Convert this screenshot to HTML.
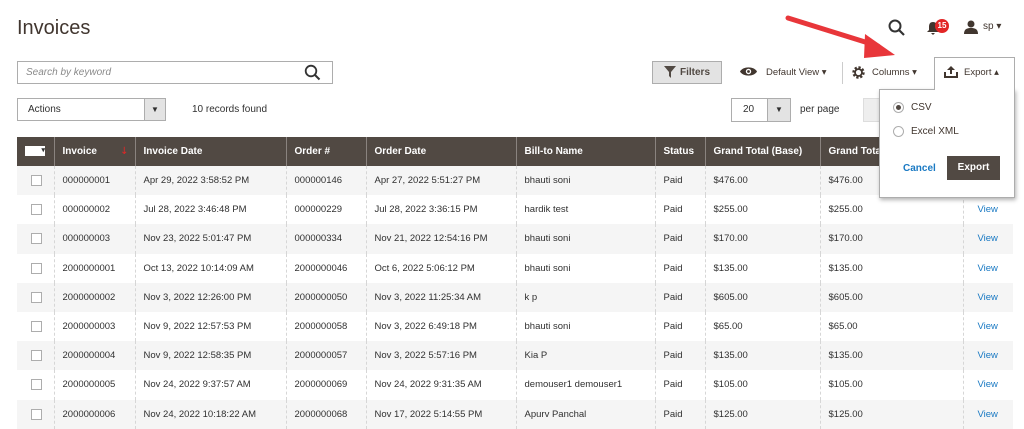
<!DOCTYPE html>
<html><head><meta charset="utf-8"><style>
*{box-sizing:border-box;margin:0;padding:0}
body{width:1024px;height:422px;overflow:hidden;background:#fff;font-family:"Liberation Sans",sans-serif;color:#303030;position:relative;font-size:10px}
.a{position:absolute}
table{position:absolute;left:17px;top:137px;width:996px;border-collapse:collapse;table-layout:fixed}
th{background:#514943;color:#fff;font-weight:bold;text-align:left;height:29px;padding-left:8px;font-size:10px;border-left:1px solid #8a837f}
td{height:29.2px;padding-left:8px;font-size:9.5px;color:#303030;border-left:1px dashed #d6d6d6}
tr:nth-child(even) td{background:#f5f5f5}
td:first-child,th:first-child{border-left:none}
.cb{width:11px;height:11px;border:1px solid #adadad;background:#fff;margin-left:6px}
.v{color:#1979c3;padding-left:14px}
</style></head><body>
<div class="a" style="left:17px;top:17px;font-size:20px;color:#41362f">Invoices</div>
<svg class="a" style="left:888px;top:19px" width="18" height="18" viewBox="0 0 18 18"><circle cx="7" cy="7" r="5.5" fill="none" stroke="#333" stroke-width="2"/><line x1="11" y1="11" x2="16" y2="16" stroke="#333" stroke-width="2.2"/></svg>
<svg class="a" style="left:926px;top:21px" width="14" height="14" viewBox="0 0 14 14"><path d="M7 1c3 0 4 2 4 5v3l2 2H1l2-2V6c0-3 1-5 4-5z M5 12h4l-2 2z" fill="#41362f"/></svg>
<div class="a" style="left:935px;top:19px;width:14px;height:14px;border-radius:7px;background:#e22626;color:#fff;font-size:8px;font-weight:bold;text-align:center;line-height:14px">15</div>
<svg class="a" style="left:964px;top:20px" width="14" height="14" viewBox="0 0 14 14"><circle cx="7" cy="4" r="3.5" fill="#41362f"/><path d="M0 14c0-5 3-6 7-6s7 1 7 6z" fill="#41362f"/></svg>
<div class="a" style="left:983px;top:21px;font-size:10px;color:#41362f">sp ▾</div>
<svg class="a" style="left:780px;top:10px" width="130" height="50" viewBox="0 0 130 50"><line x1="8" y1="8" x2="98" y2="36" stroke="#e8363a" stroke-width="5" stroke-linecap="round"/><polygon points="85,24 115,45 84,48" fill="#e8363a"/></svg>
<div class="a" style="left:17px;top:61px;width:316px;height:23px;border:1px solid #adadad"></div>
<div class="a" style="left:26px;top:67px;font-size:10px;font-style:italic;color:#8a8a8a">Search by keyword</div>
<svg class="a" style="left:304px;top:64px" width="17" height="17" viewBox="0 0 17 17"><circle cx="7" cy="7" r="5.3" fill="none" stroke="#333" stroke-width="1.8"/><line x1="11" y1="11" x2="15.5" y2="15.5" stroke="#333" stroke-width="2"/></svg>
<div class="a" style="left:17px;top:98px;width:149px;height:23px;border:1px solid #adadad"></div>
<div class="a" style="left:144px;top:99px;width:21px;height:21px;background:#e3e3e3;border-left:1px solid #adadad;text-align:center;font-size:8px;line-height:21px">▼</div>
<div class="a" style="left:28px;top:104px;font-size:10px">Actions</div>
<div class="a" style="left:192px;top:104px;font-size:10px">10 records found</div>
<div class="a" style="left:652px;top:61px;width:70px;height:23px;background:#e3e3e3;border:1px solid #adadad;font-size:10px;font-weight:bold;color:#514943;padding:5px 0 0 27px">Filters</div>
<svg class="a" style="left:664px;top:66px" width="12" height="12" viewBox="0 0 12 12"><path d="M0 0h12L7 6v6L5 10V6z" fill="#514943"/></svg>
<svg class="a" style="left:740px;top:66px" width="17" height="11" viewBox="0 0 17 11"><path d="M0 5.5C3 0 14 0 17 5.5 14 11 3 11 0 5.5z" fill="#41362f"/><circle cx="8.5" cy="5.5" r="2.7" fill="#fff"/><circle cx="8.5" cy="5.5" r="1.4" fill="#41362f"/></svg>
<div class="a" style="left:766px;top:67px;font-size:9.5px;color:#41362f">Default View ▾</div>
<div class="a" style="left:842px;top:62px;width:1px;height:22px;background:#ccc"></div>
<svg class="a" style="left:852px;top:66px" width="13" height="13" viewBox="0 0 13 13"><circle cx="6.5" cy="6.5" r="4.5" fill="none" stroke="#41362f" stroke-width="3.4" stroke-dasharray="2 1.5"/><circle cx="6.5" cy="6.5" r="3.5" fill="none" stroke="#41362f" stroke-width="1.8"/></svg>
<div class="a" style="left:872px;top:67px;font-size:9.5px;color:#41362f">Columns ▾</div>
<div class="a" style="left:934px;top:57px;width:81px;height:33px;border:1px solid #adadad;border-bottom:none;background:#fff;z-index:3"></div>
<svg class="a" style="left:944px;top:66px;z-index:4" width="14" height="12" viewBox="0 0 14 12"><path d="M7 0L3 4h3v4h2V4h3z M0 6h2v4h10V6h2v6H0z" fill="#41362f"/></svg>
<div class="a" style="left:964px;top:67px;font-size:9.5px;color:#41362f;z-index:4">Export ▴</div>
<div class="a" style="left:731px;top:98px;width:60px;height:24px;border:1px solid #adadad"></div>
<div class="a" style="left:767px;top:99px;width:23px;height:22px;background:#e3e3e3;border-left:1px solid #adadad;text-align:center;font-size:8px;line-height:22px">▼</div>
<div class="a" style="left:743px;top:104px;font-size:10px">20</div>
<div class="a" style="left:800px;top:104px;font-size:10px">per page</div>
<div class="a" style="left:863px;top:98px;width:20px;height:24px;background:#eee;border:1px solid #ddd"></div>
<table>
<colgroup><col style="width:37px"><col style="width:81px"><col style="width:151px"><col style="width:80px"><col style="width:150px"><col style="width:139px"><col style="width:50px"><col style="width:115px"><col style="width:143px"><col style="width:50px"></colgroup>
<tr><th style="padding-left:8px"><span style="display:inline-block;width:20px;height:10px;background:#fff;vertical-align:middle;font-size:7px;color:#333;text-align:right;line-height:10px">▾</span></th><th>Invoice <span style="float:right;margin-right:6px;color:#e22626;font-family:'DejaVu Sans',sans-serif;font-weight:normal">↓</span></th><th>Invoice Date</th><th>Order #</th><th>Order Date</th><th>Bill-to Name</th><th>Status</th><th>Grand Total (Base)</th><th>Grand Total (Purchased)</th><th>Action</th></tr>
<tr><td><div class="cb"></div></td><td>000000001</td><td>Apr 29, 2022 3:58:52 PM</td><td>000000146</td><td>Apr 27, 2022 5:51:27 PM</td><td>bhauti soni</td><td>Paid</td><td>$476.00</td><td>$476.00</td><td class="v">View</td></tr>
<tr><td><div class="cb"></div></td><td>000000002</td><td>Jul 28, 2022 3:46:48 PM</td><td>000000229</td><td>Jul 28, 2022 3:36:15 PM</td><td>hardik test</td><td>Paid</td><td>$255.00</td><td>$255.00</td><td class="v">View</td></tr>
<tr><td><div class="cb"></div></td><td>000000003</td><td>Nov 23, 2022 5:01:47 PM</td><td>000000334</td><td>Nov 21, 2022 12:54:16 PM</td><td>bhauti soni</td><td>Paid</td><td>$170.00</td><td>$170.00</td><td class="v">View</td></tr>
<tr><td><div class="cb"></div></td><td>2000000001</td><td>Oct 13, 2022 10:14:09 AM</td><td>2000000046</td><td>Oct 6, 2022 5:06:12 PM</td><td>bhauti soni</td><td>Paid</td><td>$135.00</td><td>$135.00</td><td class="v">View</td></tr>
<tr><td><div class="cb"></div></td><td>2000000002</td><td>Nov 3, 2022 12:26:00 PM</td><td>2000000050</td><td>Nov 3, 2022 11:25:34 AM</td><td>k p</td><td>Paid</td><td>$605.00</td><td>$605.00</td><td class="v">View</td></tr>
<tr><td><div class="cb"></div></td><td>2000000003</td><td>Nov 9, 2022 12:57:53 PM</td><td>2000000058</td><td>Nov 3, 2022 6:49:18 PM</td><td>bhauti soni</td><td>Paid</td><td>$65.00</td><td>$65.00</td><td class="v">View</td></tr>
<tr><td><div class="cb"></div></td><td>2000000004</td><td>Nov 9, 2022 12:58:35 PM</td><td>2000000057</td><td>Nov 3, 2022 5:57:16 PM</td><td>Kia P</td><td>Paid</td><td>$135.00</td><td>$135.00</td><td class="v">View</td></tr>
<tr><td><div class="cb"></div></td><td>2000000005</td><td>Nov 24, 2022 9:37:57 AM</td><td>2000000069</td><td>Nov 24, 2022 9:31:35 AM</td><td>demouser1 demouser1</td><td>Paid</td><td>$105.00</td><td>$105.00</td><td class="v">View</td></tr>
<tr><td><div class="cb"></div></td><td>2000000006</td><td>Nov 24, 2022 10:18:22 AM</td><td>2000000068</td><td>Nov 17, 2022 5:14:55 PM</td><td>Apurv Panchal</td><td>Paid</td><td>$125.00</td><td>$125.00</td><td class="v">View</td></tr>
</table>
<div class="a" style="left:879px;top:89px;width:136px;height:109px;background:#fff;border:1px solid #adadad;box-shadow:1px 2px 4px rgba(0,0,0,.3);z-index:2"></div>
<div class="a" style="left:935px;top:88px;width:79px;height:3px;background:#fff;z-index:3"></div>
<div class="a" style="left:893px;top:102px;width:11px;height:11px;border:1px solid #adadad;border-radius:50%;z-index:4;background:#fff"><div style="width:5px;height:5px;border-radius:50%;background:#514943;margin:2px"></div></div>
<div class="a" style="left:911px;top:102px;font-size:10px;z-index:4;color:#41362f">CSV</div>
<div class="a" style="left:893px;top:126px;width:11px;height:11px;border:1px solid #adadad;border-radius:50%;z-index:4;background:#fff"></div>
<div class="a" style="left:911px;top:126px;font-size:10px;z-index:4;color:#41362f">Excel XML</div>
<div class="a" style="left:903px;top:163px;font-size:10px;font-weight:bold;color:#1979c3;z-index:4">Cancel</div>
<div class="a" style="left:947px;top:156px;width:53px;height:24px;background:#514943;color:#fff;font-size:10px;font-weight:bold;text-align:center;line-height:24px;z-index:4">Export</div>
</body></html>
